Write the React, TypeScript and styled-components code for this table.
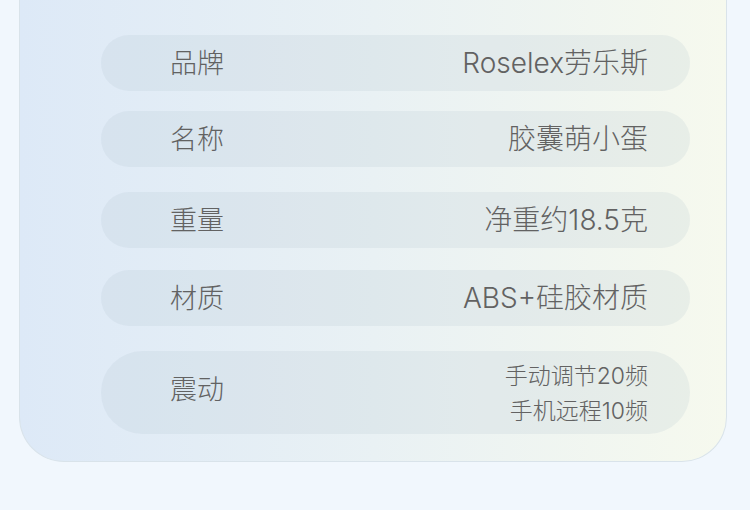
import React from "react";
import styled, { createGlobalStyle } from "styled-components";

const GlobalStyle = createGlobalStyle`
  html, body {
    margin: 0;
    padding: 0;
    background: #f1f7fd;
  }
  body {
    font-family: "Inter", "Noto Sans CJK SC", sans-serif;
  }
`;

const Page = styled.div`
  width: 750px;
  height: 510px;
  overflow: hidden;
  background: #f1f7fd;
`;

const Card = styled.div`
  margin-left: 19px;
  width: 708px;
  box-sizing: border-box;
  padding: 35px 36px 27px 81px;
  background: linear-gradient(90deg, #dde9f7 0%, #e9f1f4 50%, #f6f9ee 100%);
  border: 1px solid #d9e3ea;
  border-top: none;
  border-radius: 0 0 45px 45px;
  display: flex;
  flex-direction: column;
`;

const Row = styled.div<{ $tall?: boolean; $gap: number }>`
  display: flex;
  align-items: center;
  justify-content: space-between;
  height: ${(p) => (p.$tall ? 83 : 56)}px;
  margin-top: ${(p) => p.$gap}px;
  padding: 0 42px 0 69px;
  border-radius: 42px;
  background: rgba(170, 188, 200, 0.16);
  color: #626262;
  font-weight: 300;
`;

const Label = styled.span<{ $lift?: boolean }>`
  font-size: 27px;
  line-height: 1;
  margin-top: ${(p) => (p.$lift ? -6 : 0)}px;
`;

const Value = styled.span`
  font-size: 28px;
  line-height: 1;
  text-align: right;
`;

const MultiValue = styled.div`
  display: flex;
  flex-direction: column;
  align-items: flex-end;
  font-size: 23px;
  line-height: 35px;
  margin-top: 2px;
`;

const specs = [
  { label: "品牌", value: "Roselex劳乐斯", gap: 0 },
  { label: "名称", value: "胶囊萌小蛋", gap: 20 },
  { label: "重量", value: "净重约18.5克", gap: 25 },
  { label: "材质", value: "ABS+硅胶材质", gap: 22 },
];

export default function App() {
  return (
    <Page>
      <GlobalStyle />
      <Card>
        {specs.map((s) => (
          <Row key={s.label} $gap={s.gap}>
            <Label>{s.label}</Label>
            <Value>{s.value}</Value>
          </Row>
        ))}
        <Row $tall $gap={25}>
          <Label $lift>震动</Label>
          <MultiValue>
            <span>手动调节20频</span>
            <span>手机远程10频</span>
          </MultiValue>
        </Row>
      </Card>
    </Page>
  );
}
